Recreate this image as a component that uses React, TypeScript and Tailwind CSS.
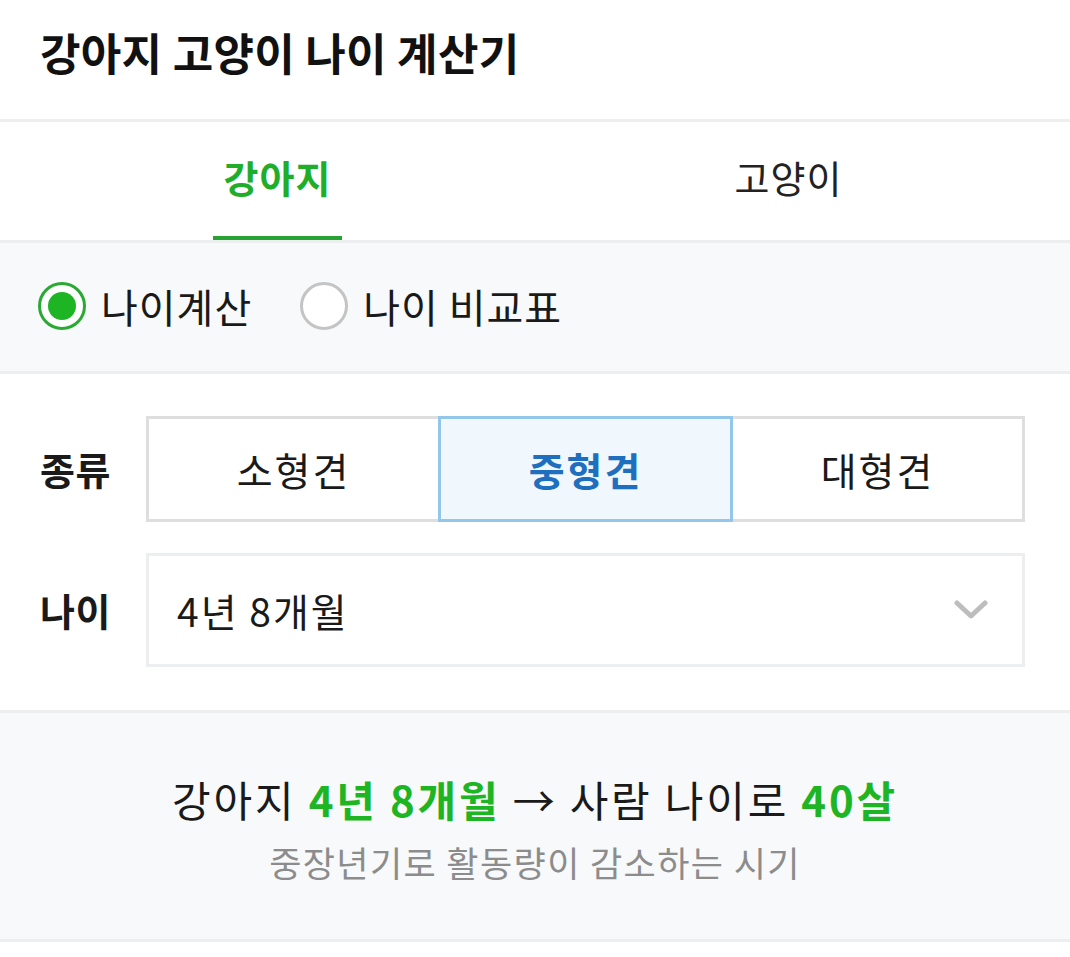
import { useState } from 'react';

const font = { fontFamily: '"Noto Sans CJK KR", "Noto Sans", sans-serif' };

const sizes = ['소형견', '중형견', '대형견'];

export default function App() {
  const [tab, setTab] = useState<'dog' | 'cat'>('dog');
  const [mode, setMode] = useState<'calc' | 'table'>('calc');
  const [size, setSize] = useState('중형견');

  return (
    <div className="min-h-screen bg-white text-[#1a1a1a]" style={font}>
      {/* Header */}
      <header className="h-[122px] border-b-[3px] border-[#eceef0] px-[40px] pt-[25px]">
        <h1 className="text-[44px] font-bold leading-[54px] tracking-[0.3px] text-[#111]">강아지 고양이 나이 계산기</h1>
      </header>

      {/* Tabs */}
      <nav className="flex h-[121px] border-b-[3px] border-[#eceef0] pl-[22px] pr-[26px]">
        {[
          { id: 'dog' as const, label: '강아지' },
          { id: 'cat' as const, label: '고양이' },
        ].map(t => (
          <button key={t.id} onClick={() => setTab(t.id)} className="flex flex-1 justify-center">
            <span
              className={`flex h-full items-center px-[11px] pb-[4px] text-[38px] leading-none tracking-[1px] ${
                tab === t.id ? 'border-b-[4px] border-[#26a332] font-bold text-[#1fae2a]' : 'border-b-[4px] border-transparent text-[#222]'
              }`}
            >
              {t.label}
            </span>
          </button>
        ))}
      </nav>

      {/* Mode radios */}
      <div className="flex h-[131px] items-center gap-[48px] border-b-[3px] border-[#eceef0] bg-[#f7f9fa] px-[38px] pb-[3px]">
        {[
          { id: 'calc' as const, label: '나이계산' },
          { id: 'table' as const, label: '나이 비교표' },
        ].map(r => (
          <button key={r.id} onClick={() => setMode(r.id)} className="flex items-center gap-[15px]">
            <span
              className={`flex h-[48px] w-[48px] items-center justify-center rounded-full border-[3px] bg-white ${
                mode === r.id ? 'border-[#2aaa35]' : 'border-[#c4c4c4]'
              }`}
            >
              {mode === r.id && <span className="h-[28px] w-[28px] rounded-full bg-[#1db524]" />}
            </span>
            <span className="text-[40px] leading-none tracking-[1px] text-[#1a1a1a]">{r.label}</span>
          </button>
        ))}
      </div>

      {/* Form */}
      <div className="flex flex-col gap-[31px] border-b-[3px] border-[#eceef0] pb-[43px] pl-[40px] pr-[45px] pt-[42px]">
        <div className="flex items-center">
          <span className="w-[106px] text-[38px] font-bold leading-none tracking-[0.5px] text-[#1a1a1a]">종류</span>
          <div className="flex h-[106px] flex-1">
            {sizes.map((s, i) => {
              const on = size === s;
              return (
                <button
                  key={s}
                  onClick={() => setSize(s)}
                  className={`flex flex-1 items-center justify-center border-[3px] text-[39px] leading-none tracking-[2px] ${
                    on ? 'z-10 border-[#92c6ea] bg-[#f0f7fd] font-semibold text-[#1f6fbf]' : 'border-[#dedede] bg-white text-[#1a1a1a]'
                  } ${i > 0 ? '-ml-[3px]' : ''}`}
                >
                  {s}
                </button>
              );
            })}
          </div>
        </div>
        <div className="flex items-center">
          <span className="w-[106px] text-[38px] font-bold leading-none tracking-[0.5px] text-[#1a1a1a]">나이</span>
          <div className="flex h-[114px] flex-1 items-center justify-between border-[3px] border-[#eceeef] bg-white pl-[28px] pr-[34px]">
            <span className="text-[39px] leading-none tracking-[2px] text-[#1a1a1a]">4년 8개월</span>
            <svg width="34" height="22" viewBox="0 0 34 22" fill="none">
              <path d="M3 4 L17 17 L31 4" stroke="#bdbdbd" strokeWidth="5" strokeLinecap="round" strokeLinejoin="round" />
            </svg>
          </div>
        </div>
      </div>

      {/* Result */}
      <div className="flex h-[229px] flex-col items-center justify-center gap-[24px] border-b-[3px] border-[#eceef0] bg-[#f7f9fa] pt-[4px]">
        <p className="text-[42px] leading-none tracking-[2.8px] text-[#1a1a1a]">
          강아지 <span className="font-bold text-[#1db524]">4년 8개월</span> → 사람 나이로{' '}
          <span className="font-bold text-[#1db524]">40살</span>
        </p>
        <p className="text-[35px] leading-none tracking-[1.4px] text-[#8c8c8c]">중장년기로 활동량이 감소하는 시기</p>
      </div>
    </div>
  );
}
